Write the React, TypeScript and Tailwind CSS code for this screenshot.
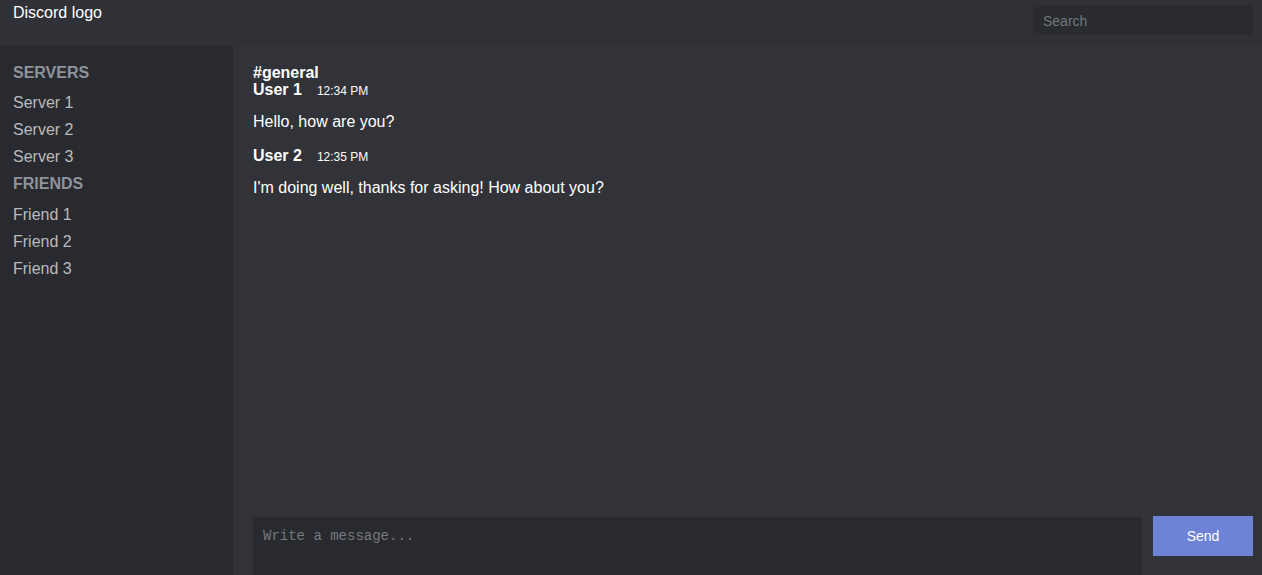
import React from 'react';

const servers = ['Server 1', 'Server 2', 'Server 3'];
const friends = ['Friend 1', 'Friend 2', 'Friend 3'];

const messages = [
  { user: 'User 1', time: '12:34 PM', text: 'Hello, how are you?' },
  { user: 'User 2', time: '12:35 PM', text: "I'm doing well, thanks for asking! How about you?" },
];

export default function App() {
  return (
    <div className="h-screen overflow-hidden flex flex-col bg-[#313338] text-white font-['Liberation_Sans',Arial,sans-serif]">
      {/* Top bar */}
      <header className="h-[45px] shrink-0 flex items-start justify-between pl-[13px] pr-[9px] bg-[#2f3136]">
        <div className="pt-[4px] text-base leading-[18px]">Discord logo</div>
        <input
          type="text"
          placeholder="Search"
          className="mt-[5px] w-[220px] h-[30px] px-[10px] pt-[2px] bg-[#292b2f] text-sm text-white placeholder:text-[#72767d] outline-none"
        />
      </header>

      <div className="flex-1 flex min-h-0">
        {/* Sidebar */}
        <aside className="w-[233px] shrink-0 bg-[#292a2f] pl-[13px] pt-[19px]">
          <h2 className="text-base font-bold leading-[18px] text-[#8e939c] mb-[7px]">SERVERS</h2>
          <ul>
            {servers.map((s) => (
              <li key={s} className="text-base leading-[27px] text-[#b9bbbe]">
                {s}
              </li>
            ))}
          </ul>
          <h2 className="text-base font-bold leading-[18px] text-[#8e939c] mt-[5px] mb-[8px]">FRIENDS</h2>
          <ul>
            {friends.map((f) => (
              <li key={f} className="text-base leading-[27px] text-[#b9bbbe]">
                {f}
              </li>
            ))}
          </ul>
        </aside>

        {/* Chat */}
        <main className="flex-1 flex flex-col pl-[20px] pr-[9px] pt-[19px] min-w-0">
          <div className="flex-1">
            <h1 className="text-base font-bold leading-[18px]">#general</h1>
            {messages.map((m, i) => (
              <div key={m.user} className={i === 0 ? '' : 'mt-[17px]'}>
                <div className="flex items-baseline h-[16px]">
                  <span className="text-base leading-[16px] font-bold">{m.user}</span>
                  <span className="ml-[15px] text-xs leading-[16px]">{m.time}</span>
                </div>
                <p className="mt-[15px] text-base leading-[18px]">{m.text}</p>
              </div>
            ))}
          </div>

          <div className="flex items-start gap-[11px] -mb-[62px]">
            <textarea
              placeholder="Write a message..."
              className="flex-1 h-[120px] mt-[1px] px-[10px] py-[9px] bg-[#292a2f] text-sm text-white font-['Liberation_Mono',monospace] placeholder:text-[#75787e] outline-none resize-none"
            />
            <button className="w-[100px] h-[40px] bg-[#6e83d6] text-sm text-white">Send</button>
          </div>
        </main>
      </div>
    </div>
  );
}
